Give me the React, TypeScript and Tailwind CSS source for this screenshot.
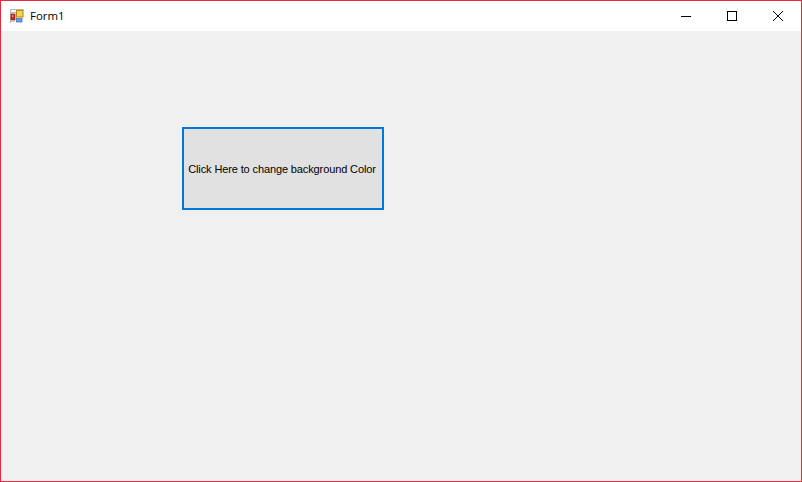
import React from 'react';

const FormIcon = () => (
  <svg width="14" height="14" viewBox="0 0 14 14" className="block">
    <rect x="0" y="0" width="14" height="14" fill="#fafafa" />
    <path d="M0.5 14V0.5H14" stroke="#b8b8b8" fill="none" />
    <rect x="0" y="3" width="6" height="1" fill="#b8b8b8" />
    <rect x="1" y="5" width="4" height="6" fill="#c8281e" stroke="#8c2018" strokeWidth="0.7" />
    <rect x="2" y="6" width="1.5" height="2" fill="#f08a70" />
    <rect x="6.5" y="1.5" width="6.5" height="6.5" fill="#f7cf5a" stroke="#b8860b" />
    <rect x="6.5" y="9.5" width="5.5" height="3.5" fill="#6c9ce8" stroke="#3f6cb8" strokeWidth="0.7" />
    <rect x="1" y="12" width="4" height="1" fill="#d0d0d0" />
  </svg>
);

const App: React.FC = () => {
  return (
    <div className="w-[802px] h-[482px] flex flex-col border border-[#e8283c] bg-[#f0f0f0] overflow-hidden font-['Liberation_Sans',sans-serif]">
      {/* Title bar */}
      <div className="h-[30px] shrink-0 bg-white flex items-center">
        <div className="ml-[9px] mr-[6px]">
          <FormIcon />
        </div>
        <span className="text-[11.4px] text-black font-['Open_Sans',sans-serif]">Form1</span>
        <div className="ml-auto flex items-center">
          <button className="w-[46px] h-[30px] flex items-center justify-center">
            <svg width="10" height="10" viewBox="0 0 10 10"><path d="M0 5.5H10" stroke="#000" fill="none" /></svg>
          </button>
          <button className="w-[46px] h-[30px] flex items-center justify-center">
            <svg width="10" height="10" viewBox="0 0 10 10"><rect x="0.5" y="0.5" width="9" height="9" stroke="#000" fill="none" /></svg>
          </button>
          <button className="w-[46px] h-[30px] flex items-center justify-center">
            <svg width="10" height="10" viewBox="0 0 10 10"><path d="M0 0L10 10M10 0L0 10" stroke="#000" fill="none" /></svg>
          </button>
        </div>
      </div>
      {/* Form body */}
      <div className="flex-1 pt-[96px] pl-[181px]">
        <button className="w-[202px] h-[83px] border-2 border-[#0078d7] bg-[#e1e1e1] flex items-center justify-center pr-[2px] pt-[1px] text-[11px] tracking-[-0.12px] text-black whitespace-nowrap">
          Click Here to change background Color
        </button>
      </div>
    </div>
  );
};

export default App;
